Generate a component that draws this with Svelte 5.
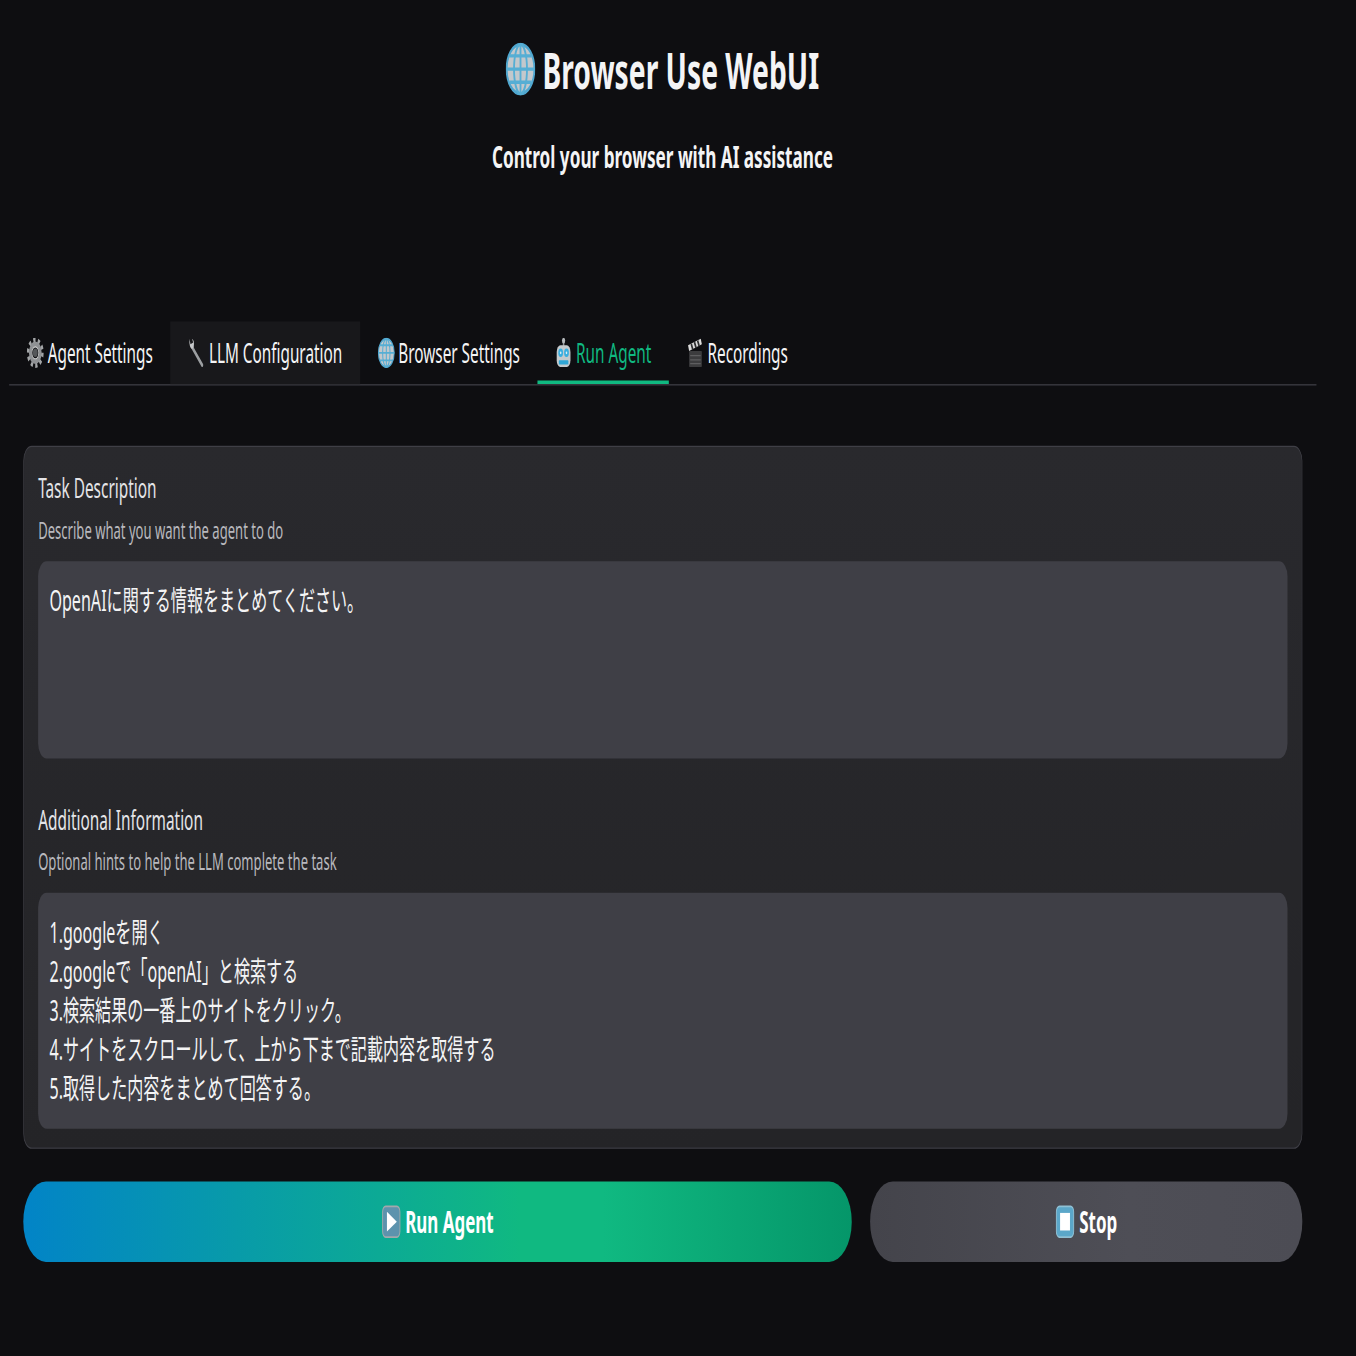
<script>
  const tabs = [
    { icon: 'gear', label: 'Agent Settings' },
    { icon: 'wrench', label: 'LLM Configuration', hover: true },
    { icon: 'globe', label: 'Browser Settings' },
    { icon: 'robot', label: 'Run Agent', active: true },
    { icon: 'clapper', label: 'Recordings' }
  ];
  const hints = [
    '1.googleを開く',
    '2.googleで「openAI」と検索する',
    '3.検索結果の一番上のサイトをクリック。',
    '4.サイトをスクロールして、上から下まで記載内容を取得する',
    '5.取得した内容をまとめて回答する。'
  ];
</script>

{#snippet icon(name, cls)}
  <svg class={cls} viewBox="0 0 32 32" aria-hidden="true">
    {#if name === 'globe'}
      <circle cx="16" cy="16" r="15" fill="#c3c8cc" stroke="#4fa6cf" stroke-width="2"/>
      <g fill="none" stroke="#56aed4" stroke-width="2">
        <ellipse cx="16" cy="16" rx="7" ry="15"/>
        <path d="M16 1v30M1 16h30M4 8h24M4 24h24"/>
      </g>
    {:else if name === 'gear'}
      <circle cx="16" cy="16" r="13.500" fill="none" stroke="#a3a5a7" stroke-width="5" stroke-dasharray="4.240 4.240"/>
      <circle cx="16" cy="16" r="9.500" fill="none" stroke="#8f9194" stroke-width="5"/>
      <circle cx="16" cy="16" r="6.500" fill="none" stroke="#c9cacb" stroke-width="1.500"/>
      <circle cx="16" cy="16" r="4.500" fill="#55575a"/>
    {:else if name === 'wrench'}
      <path d="M7 9 L27 29" stroke="#9b9ea1" stroke-width="4" stroke-linecap="round"/>
      <path d="M3 1 L5 7 L10 5 L8 1 Q13 3 11 10 L8 12 Q2 10 3 1Z" fill="#c6c8ca"/>
    {:else if name === 'robot'}
      <path d="M16 2v7" stroke="#8f9396" stroke-width="3"/>
      <circle cx="16" cy="3" r="3" fill="#b4b8bb"/>
      <rect x="3" y="8" width="26" height="23" rx="7" fill="#c4cacd"/>
      <circle cx="10.500" cy="16" r="4.500" fill="#37aee0"/>
      <circle cx="21.500" cy="16" r="4.500" fill="#37aee0"/>
      <circle cx="10.500" cy="16" r="1.500" fill="#d8eef7"/>
      <circle cx="21.500" cy="16" r="1.500" fill="#d8eef7"/>
      <rect x="7" y="24" width="18" height="4.500" rx="1" fill="#2fa6d6"/>
    {:else if name === 'clapper'}
      <rect x="5" y="14" width="24" height="17" rx="1" fill="#3c3c3e"/>
      <path d="M7 19h20M7 23.500h20M7 27.500h20" stroke="#5e5e60" stroke-width="1.500"/>
      <path d="M3 8 L27 1 L29 7 L5 14Z" fill="#dcdcdc"/>
      <path d="M9 6.500l3 6M15 4.500l3 6M21 3l3 6" stroke="#2f2f31" stroke-width="3"/>
    {:else if name === 'play'}
      <rect x="2" y="2" width="28" height="28" rx="5" fill="#5d93ad"/>
      <rect x="2" y="2" width="28" height="28" rx="5" fill="none" stroke="#a3a8ac" stroke-width="1.500"/>
      <path d="M9 7 L25 16 L9 25Z" fill="#fff"/>
    {:else if name === 'stop'}
      <rect x="2" y="2" width="28" height="28" rx="5" fill="#5ba7c9"/>
      <rect x="2" y="2" width="28" height="28" rx="5" fill="none" stroke="#8fc0d4" stroke-width="1.500"/>
      <rect x="8" y="8" width="16" height="16" fill="#fff"/>
    {/if}
  </svg>
{/snippet}

<div class="viewport">
  <div class="stage">
    <header class="head">
      <h1>{@render icon('globe', 'ico-title')}Browser Use WebUI</h1>
      <h3>Control your browser with AI assistance</h3>
    </header>

    <nav class="tabs">
      {#each tabs as t}
        <button class="tab" class:hover={t.hover} class:active={t.active}>
          {@render icon(t.icon, 'ico-tab')}{t.label}
        </button>
      {/each}
    </nav>

    <section class="panel">
      <div class="field">
        <div class="label">Task Description</div>
        <div class="hint">Describe what you want the agent to do</div>
        <div class="input one">OpenAIに関する情報をまとめてください。</div>
      </div>
      <div class="field second">
        <div class="label">Additional Information</div>
        <div class="hint">Optional hints to help the LLM complete the task</div>
        <div class="input">
          {#each hints as h}<div>{h}</div>{/each}
        </div>
      </div>
    </section>

    <div class="actions">
      <button class="btn run">{@render icon('play', 'ico-btn')}Run Agent</button>
      <button class="btn stop">{@render icon('stop', 'ico-btn')}Stop</button>
    </div>
  </div>
</div>

<style>
  :global(body) { margin: 0; background: #0e0e11; }
  .viewport { width: 1356px; height: 1356px; overflow: hidden; background: #0e0e11; }
  .stage {
    width: 1920px;
    height: 1080px;
    transform: scale(0.70625, 1.2556);
    transform-origin: 0 0;
    box-sizing: border-box;
    padding-top: 29px;
    color: #f4f4f5;
    font-family: "Noto Sans", "Noto Sans CJK JP", sans-serif;
  }
  .head { width: 1876px; text-align: center; }
  h1 {
    margin: 0;
    height: 54px;
    font-size: 40px;
    line-height: 54px;
    font-weight: 700;
    display: flex;
    align-items: center;
    justify-content: center;
    gap: 10px;
  }
  h3 { margin: 23.500px 0 0; font-size: 24.300px; line-height: 36px; font-weight: 700; }
  .ico-title { width: 42px; height: 42px; flex: none; margin-top: -2px; }
  .ico-tab { width: 24px; height: 24px; flex: none; }
  .ico-btn { width: 28px; height: 28px; flex: none; }
  .tabs {
    margin: 113.300px 0 0 13px;
    width: 1851px;
    height: 50px;
    display: flex;
    border-bottom: 1.500px solid #3f3f46;
  }
  .tab {
    all: unset;
    box-sizing: border-box;
    height: 50px;
    padding: 0 25px;
    display: flex;
    align-items: center;
    gap: 5.500px;
    font-size: 21.700px;
    color: #f4f4f5;
  }
  .tab.hover { background: #18181b; }
  .tab.active { color: #10b981; box-shadow: inset 0 -3px 0 #10b981; }
  .panel {
    margin: 48px 0 0 33px;
    width: 1811px;
    height: 560.500px;
    box-sizing: border-box;
    padding: 16px 20px;
    background: linear-gradient(180deg, #29292d, #242427);
    border: 1.500px solid #3f3f46;
    border-radius: 12px;
  }
  .field.second { margin-top: 34.800px; }
  .label { font-size: 21.800px; line-height: 28px; height: 28px; margin-top: 3px; color: #e4e4e7; }
  .hint { font-size: 18.500px; line-height: 26px; margin-top: 6px; color: #b8b8bd; }
  .input {
    margin-top: 12px;
    padding: 16px;
    background: #3f3f46;
    border-radius: 12px;
    font-size: 22.750px;
    line-height: 31.200px;
    color: #f4f4f5;
  }
  .input > div { height: 31.200px; }
  .input.one { height: 157px; box-sizing: border-box; }
  .actions { margin: 25.300px 0 0 32.500px; width: 1811.500px; display: flex; gap: 26px; }
  .btn {
    all: unset;
    box-sizing: border-box;
    height: 64px;
    border-radius: 32px;
    display: flex;
    align-items: center;
    justify-content: center;
    gap: 6px;
    font-size: 24px;
    font-weight: 700;
    color: #fff;
  }
  .run { flex: 1172 1 0; background: linear-gradient(90deg, #0284c7 0%, #10b981 60%, #10b981 70%, #059669 100%); }
  .stop { flex: 611 1 0; background: linear-gradient(90deg, #44444b 0%, #4e4e56 60%, #4c4c54 100%); }
</style>
